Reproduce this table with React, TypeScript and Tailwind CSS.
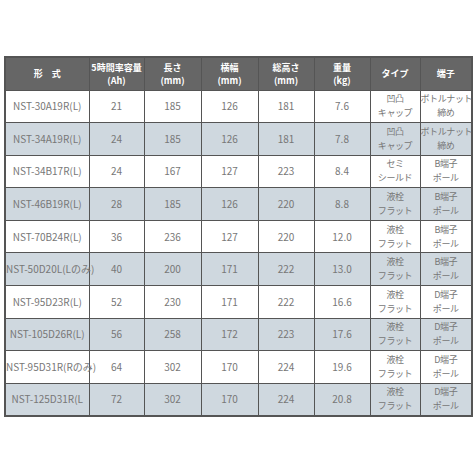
import React from 'react';

// Battery spec table
const HEAD = [
  ['形　式'],
  ['5時間率容量', '(Ah)'],
  ['長さ', '(mm)'],
  ['横幅', '(mm)'],
  ['総高さ', '(mm)'],
  ['重量', '(kg)'],
  ['タイプ'],
  ['端子'],
];

const ROWS: string[][][] = [
  [['NST-30A19R(L)'], ['21'], ['185'], ['126'], ['181'], ['7.6'], ['凹凸', 'キャップ'], ['ボトルナット', '締め']],
  [['NST-34A19R(L)'], ['24'], ['185'], ['126'], ['181'], ['7.8'], ['凹凸', 'キャップ'], ['ボトルナット', '締め']],
  [['NST-34B17R(L)'], ['24'], ['167'], ['127'], ['223'], ['8.4'], ['セミ', 'シールド'], ['B端子', 'ポール']],
  [['NST-46B19R(L)'], ['28'], ['185'], ['126'], ['220'], ['8.8'], ['液栓', 'フラット'], ['B端子', 'ポール']],
  [['NST-70B24R(L)'], ['36'], ['236'], ['127'], ['220'], ['12.0'], ['液栓', 'フラット'], ['B端子', 'ポール']],
  [['NST-50D20L(Lのみ)'], ['40'], ['200'], ['171'], ['222'], ['13.0'], ['液栓', 'フラット'], ['B端子', 'ポール']],
  [['NST-95D23R(L)'], ['52'], ['230'], ['171'], ['222'], ['16.6'], ['液栓', 'フラット'], ['D端子', 'ポール']],
  [['NST-105D26R(L)'], ['56'], ['258'], ['172'], ['223'], ['17.6'], ['液栓', 'フラット'], ['D端子', 'ポール']],
  [['NST-95D31R(Rのみ)'], ['64'], ['302'], ['170'], ['224'], ['19.6'], ['液栓', 'フラット'], ['D端子', 'ポール']],
  [['NST-125D31R(L'], ['72'], ['302'], ['170'], ['224'], ['20.8'], ['液栓', 'フラット'], ['D端子', 'ポール']],
];

const WIDTHS = ['w-[84px]', 'w-[55px]', 'w-[57px]', 'w-[57px]', 'w-[56px]', 'w-[56px]', 'w-[50px]', 'w-[52px]'];

export default function App() {
  return (
    <div
      className="w-[474px] h-[474px] bg-white pl-[4px] pt-[56px]"
      style={{ fontFamily: "'Noto Sans CJK JP', 'DejaVu Sans', sans-serif" }}
    >
      <table className="table-fixed border-collapse w-[467px] border-2 border-[#555]">
        <colgroup>
          {WIDTHS.map((w, i) => (
            <col key={i} className={w} />
          ))}
        </colgroup>
        <thead>
          <tr className="h-[33px] bg-[#666]">
            {HEAD.map((h, i) => (
              <th
                key={i}
                className="border border-[#555] text-white text-[9px] font-bold leading-[13px] p-0 whitespace-nowrap"
              >
                {h.map((l, j) => (
                  <div key={j}>{l}</div>
                ))}
              </th>
            ))}
          </tr>
        </thead>
        <tbody>
          {ROWS.map((row, r) => (
            <tr key={r} className={`h-[32.6px] ${r % 2 === 1 ? 'bg-[#cfd8df]' : 'bg-white'}`}>
              {row.map((c, i) => (
                <td
                  key={i}
                  className={`border border-[#555] text-[#777] leading-[14px] text-center p-0 whitespace-nowrap ${
                    i >= 6 ? 'text-[9px] tracking-[-0.4px]' : 'text-[10px]'
                  }`}
                >
                  {c.map((l, j) => (
                    <div key={j}>{l}</div>
                  ))}
                </td>
              ))}
            </tr>
          ))}
        </tbody>
      </table>
    </div>
  );
}
